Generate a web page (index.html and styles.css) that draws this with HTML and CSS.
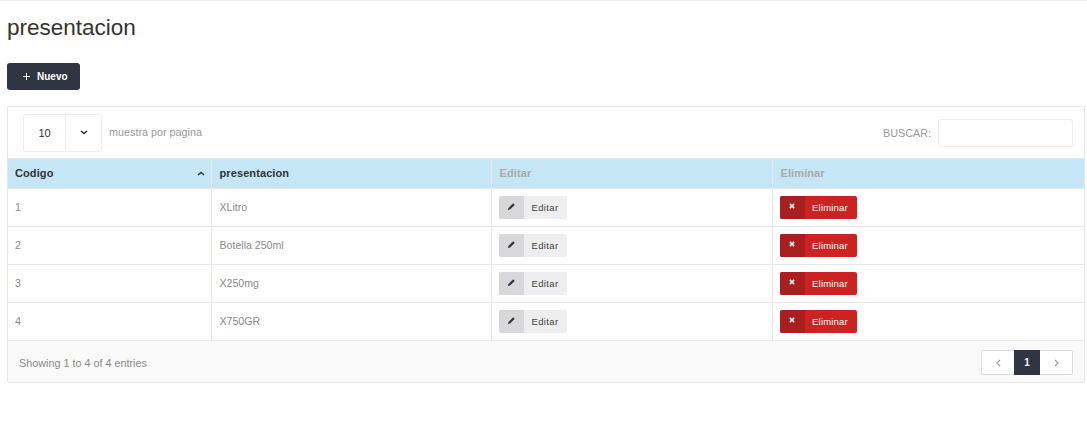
FILE: index.html
```html
<!DOCTYPE html>
<html lang="es">
<head>
<meta charset="utf-8">
<title>presentacion</title>
<link rel="stylesheet" href="styles.css">
</head>
<body>
<main class="page">
  <h1 class="title">presentacion</h1>
  <button class="btn-new" type="button">
    <svg class="plus" viewBox="0 0 7 7" width="7" height="7"><path d="M3.5 0v7M0 3.5h7" stroke="currentColor" stroke-width="1" fill="none"/></svg>
    Nuevo
  </button>
  <section class="panel">
    <div class="toolbar">
      <div class="length">
        <div class="select">
          <span class="select-value">10</span>
          <span class="select-arrow"><svg viewBox="0 0 8 5" width="8" height="5"><path d="M1 1l3 2.5L7 1" stroke="#333" stroke-width="1.6" fill="none"/></svg></span>
        </div>
        <span class="hint">muestra por pagina</span>
      </div>
      <label class="search">BUSCAR:<input class="search-input" type="text"></label>
    </div>
    <table class="grid">
      <colgroup><col class="c1"><col class="c2"><col class="c3"><col class="c4"></colgroup>
      <thead>
        <tr>
          <th class="sorted">Codigo<svg class="sort" viewBox="0 0 8 5" width="8" height="5"><path d="M1 4l3-2.5L7 4" stroke="#333" stroke-width="1.6" fill="none"/></svg></th>
          <th>presentacion</th>
          <th class="muted">Editar</th>
          <th class="muted">Eliminar</th>
        </tr>
      </thead>
      <tbody>
        <tr><td>1</td><td>XLitro</td>
          <td><button class="lbtn edit" type="button"><span class="ico"><svg viewBox="0 0 10 10" width="9" height="9"><path d="M1 9l.6-2.4L6.8 1.4l1.8 1.8L3.4 8.4z" fill="#33373f"/></svg></span><span class="lbl">Editar</span></button></td>
          <td><button class="lbtn del" type="button"><span class="ico"><svg viewBox="0 0 7 7" width="6" height="6"><path d="M1 1l5 5M6 1L1 6" stroke="#fff" stroke-width="1.8"/></svg></span><span class="lbl">Eliminar</span></button></td></tr>
        <tr><td>2</td><td>Botella 250ml</td>
          <td><button class="lbtn edit" type="button"><span class="ico"><svg viewBox="0 0 10 10" width="9" height="9"><path d="M1 9l.6-2.4L6.8 1.4l1.8 1.8L3.4 8.4z" fill="#33373f"/></svg></span><span class="lbl">Editar</span></button></td>
          <td><button class="lbtn del" type="button"><span class="ico"><svg viewBox="0 0 7 7" width="6" height="6"><path d="M1 1l5 5M6 1L1 6" stroke="#fff" stroke-width="1.8"/></svg></span><span class="lbl">Eliminar</span></button></td></tr>
        <tr><td>3</td><td>X250mg</td>
          <td><button class="lbtn edit" type="button"><span class="ico"><svg viewBox="0 0 10 10" width="9" height="9"><path d="M1 9l.6-2.4L6.8 1.4l1.8 1.8L3.4 8.4z" fill="#33373f"/></svg></span><span class="lbl">Editar</span></button></td>
          <td><button class="lbtn del" type="button"><span class="ico"><svg viewBox="0 0 7 7" width="6" height="6"><path d="M1 1l5 5M6 1L1 6" stroke="#fff" stroke-width="1.8"/></svg></span><span class="lbl">Eliminar</span></button></td></tr>
        <tr><td>4</td><td>X750GR</td>
          <td><button class="lbtn edit" type="button"><span class="ico"><svg viewBox="0 0 10 10" width="9" height="9"><path d="M1 9l.6-2.4L6.8 1.4l1.8 1.8L3.4 8.4z" fill="#33373f"/></svg></span><span class="lbl">Editar</span></button></td>
          <td><button class="lbtn del" type="button"><span class="ico"><svg viewBox="0 0 7 7" width="6" height="6"><path d="M1 1l5 5M6 1L1 6" stroke="#fff" stroke-width="1.8"/></svg></span><span class="lbl">Eliminar</span></button></td></tr>
      </tbody>
    </table>
    <div class="foot">
      <span class="info">Showing 1 to 4 of 4 entries</span>
      <nav class="pager">
        <span class="pg"><svg viewBox="0 0 5 8" width="5" height="8"><path d="M4 1L1 4l3 3" stroke="#999" stroke-width="1.1" fill="none"/></svg></span>
        <span class="pg current">1</span>
        <span class="pg"><svg viewBox="0 0 5 8" width="5" height="8"><path d="M1 1l3 3-3 3" stroke="#999" stroke-width="1.1" fill="none"/></svg></span>
      </nav>
    </div>
  </section>
</main>
</body>
</html>
```
FILE: styles.css
```css
* { box-sizing: border-box; }
html, body { margin: 0; padding: 0; background: #fff; }
body { font-family: "Liberation Sans", Arial, sans-serif; font-size: 11px; color: #8a8a8a; }
.page { padding: 0 2px 0 7px; border-top: 1px solid #eee; margin: 0; height: 440px; }
.title { margin: 0; padding-top: 12px; height: 62px; font-size: 22.5px; line-height: 29px; font-weight: 400; color: #333; }
.btn-new { display: flex; align-items: center; gap: 7px; width: 73px; height: 27px; padding: 0 0 0 16px; border: 0; border-radius: 3px; background: #2f3542; color: #fff; font: 700 10px "Liberation Sans", Arial, sans-serif; }
.plus { display: block; margin-top: -1px; }
.panel { margin-top: 16px; height: 277px; border: 1px solid #e8e8e8; border-radius: 2px; display: flex; flex-direction: column; }
.toolbar { height: 51px; display: flex; justify-content: space-between; align-items: center; padding: 0 11px 0 15px; }
.length { display: flex; align-items: center; gap: 7px; }
.select { display: flex; width: 79px; height: 38px; border: 1px solid #eee; border-radius: 3px; }
.select-value { width: 42px; display: flex; align-items: center; justify-content: center; color: #333; font-size: 11px; border-right: 1px solid #eee; }
.select-arrow { flex: 1; display: flex; align-items: center; justify-content: center; }
.hint { font-size: 10.8px; color: #999; margin-top: -2px; }
.search { display: flex; align-items: center; gap: 7px; font-size: 10.8px; color: #999; }
.search-input { width: 135px; height: 28px; border: 1px solid #eee; border-radius: 3px; background: #fff; padding: 0; outline: 0; }
.grid { width: 100%; border-collapse: collapse; table-layout: fixed; border-top: 1px solid #e8e8e8; }
.c1 { width: 203px; } .c2 { width: 280px; } .c3 { width: 281px; }
th { height: 30px; padding: 0 7px 1px 8px; text-align: left; background: #c4e6f7; color: #333; font-size: 11px; font-weight: 700; letter-spacing: .1px; border-bottom: 1px solid #e8e8e8; border-right: 1px solid #e8e8e8; }
th:first-child, td:first-child { padding-left: 7px; }
th:last-child, td:last-child { border-right: 0; }
th.muted { color: #aaa; }
.sorted { position: relative; }
.sort { position: absolute; right: 6px; top: 12px; }
td { height: 38px; padding: 0 7px 1px 8px; border-bottom: 1px solid #e8e8e8; border-right: 1px solid #e8e8e8; font-size: 10.6px; color: #8a8a8a; }
td .lbtn { margin-left: -1px; }
.lbtn { display: flex; height: 23px; padding: 0; border: 0; border-radius: 2px; overflow: hidden; font: 400 9.5px "Liberation Sans", Arial, sans-serif; letter-spacing: .2px; }
.ico { width: 25px; display: flex; align-items: center; justify-content: center; }
.ico svg { display: block; margin-top: -2px; }
.lbl { display: flex; align-items: center; justify-content: center; }
.edit { width: 68px; background: #eeeef0; color: #444; }
.edit .ico { background: #d8d8db; }
.edit .lbl { flex: 1; letter-spacing: .4px; }
.del { width: 77px; background: #cc2222; color: #fff; }
.del .ico { background: #a91e1e; }
.del .lbl { flex: 1; padding-right: 1px; }
.foot { flex: 1; display: flex; justify-content: space-between; align-items: center; background: #f9f9f9; padding: 2px 11px 0; }
.info { font-size: 10.8px; color: #8a8a8a; }
.pager { display: flex; height: 25px; border: 1px solid #ddd; border-radius: 2px; background: #fff; }
.pg { width: 32px; display: flex; align-items: center; justify-content: center; }
.pg.current { width: 26px; background: #2f3542; color: #fff; font-weight: 700; font-size: 10px; margin: -1px 0; }
```
